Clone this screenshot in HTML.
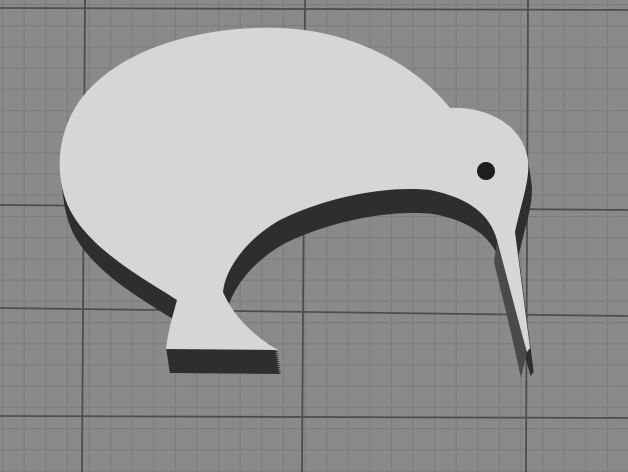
<!DOCTYPE html>
<html><head><style>
html,body{margin:0;padding:0;width:628px;height:472px;overflow:hidden;background:#8a8a8a}
svg{display:block}
</style></head><body>
<svg width="628" height="472" viewBox="0 0 628 472" xmlns="http://www.w3.org/2000/svg">
<defs>
<pattern id="g" width="21.6" height="21.2" patternUnits="userSpaceOnUse" x="2" y="4">
<rect width="21.6" height="21.2" fill="#8a8a8a"/>
<path d="M0 0.5H21.6M0.5 0V21.2" stroke="#7c7c7c" stroke-width="1.2"/>
</pattern>
<path id="k" d="M177,300 C150,282 92,252 70,210 C55,180 56,140 75,108 C110,50 200,25 280,28 C360,31 420,70 450,108 C480,106 522,120 528,160 C530,180 522,200 515,232 L530,348 L527,352 C518,320 505,270 497,240 C490,215 470,198 430,190 C380,185 320,200 280,220 C245,240 225,270 223,292 C235,320 260,340 278,350 L166,349 C168,330 173,315 177,300 Z"/>
</defs>
<rect width="628" height="472" fill="url(#g)"/>
<g stroke="#4e4e4e" stroke-width="1.8">
<path d="M85 0 L82 472"/>
<path d="M305 0 L302 472"/>
<path d="M528 0 L526 472"/>
<path d="M0 8 L628 10"/>
<path d="M0 205 L628 210"/>
<path d="M0 308 L628 316"/>
<path d="M0 416 L628 418"/>
</g>
<g fill="#2e2e2e">
<use href="#k" transform="translate(0.3,2)"/>
<use href="#k" transform="translate(0.6,4)"/>
<use href="#k" transform="translate(0.9,6)"/>
<use href="#k" transform="translate(1.2,8)"/>
<use href="#k" transform="translate(1.5,10)"/>
<use href="#k" transform="translate(1.8,12)"/>
<use href="#k" transform="translate(2.1,14)"/>
<use href="#k" transform="translate(2.4,16)"/>
<use href="#k" transform="translate(2.7,18)"/>
<use href="#k" transform="translate(3,20)"/>
<use href="#k" transform="translate(3.3,22)"/>
<use href="#k" transform="translate(3.6,24)"/>
</g>
<path d="M497,240 C505,270 518,320 527,352 L521,378 C513,340 502,295 494,262 Z" fill="#4a4a4a"/>
<use href="#k" fill="#d6d6d6"/>
<circle cx="486" cy="171" r="9" fill="#1e1e1e"/>
</svg>
</body></html>
